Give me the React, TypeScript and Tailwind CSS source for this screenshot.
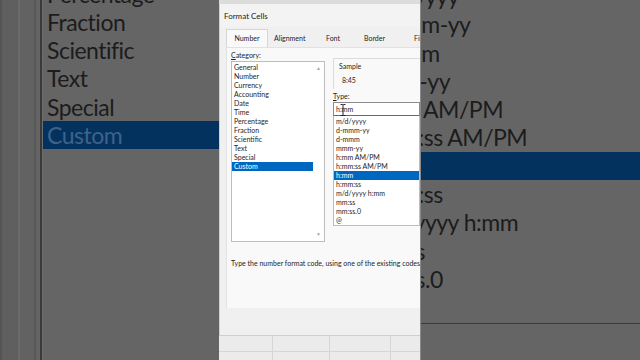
import React from "react";

const leftItems = ["Percentage", "Fraction", "Scientific", "Text", "Special", "Custom"];
const rightItems = [
  "m/d/yyyy",
  "d-mmm-yy",
  "d-mmm",
  "mmm-yy",
  "h:mm AM/PM",
  "h:mm:ss AM/PM",
  "h:mm",
  "h:mm:ss",
  "m/d/yyyy h:mm",
  "mm:ss",
  "mm:ss.0",
  "@",
];
const categories = [
  "General",
  "Number",
  "Currency",
  "Accounting",
  "Date",
  "Time",
  "Percentage",
  "Fraction",
  "Scientific",
  "Text",
  "Special",
  "Custom",
];

const big = { fontFamily: 'Lato, "Noto Sans", sans-serif' };
const ui = { fontFamily: 'Lato, "Noto Sans", sans-serif' };

function LeftBg() {
  return (
    <div className="w-[219px] shrink-0 h-full flex overflow-hidden">
      <div className="flex h-full shrink-0">
        <div className="w-[2px] bg-[#555555]" />
        <div className="w-[16px] bg-[#5f5f5f]" />
        <div className="w-[2px] bg-[#6b6b6b]" />
        <div className="w-[14px] bg-[#626262]" />
        <div className="w-[2px] bg-[#585858]" />
        <div className="w-[4px] bg-[#646464]" />
        <div className="w-[2px] bg-[#3a3a3a]" />
        <div className="w-[1px] bg-[#6e6e6e]" />
      </div>
      <div className="flex-1 flex flex-col mt-[-20.5px]" style={big}>
        {leftItems.map((t) => (
          <div
            key={t}
            className={
              "h-[28.3px] shrink-0 pl-[4px] text-[23px] leading-[28px] whitespace-nowrap tracking-[-0.5px] " +
              (t === "Custom" ? "bg-[#04325f] text-[#3f6289]" : "text-[#1c1c1c]")
            }
          >
            {t}
          </div>
        ))}
      </div>
    </div>
  );
}

function RightBg() {
  return (
    <div className="flex-1 h-full overflow-hidden border-l border-[#8a8a8a]">
      <div className="flex flex-col mt-[-18px] ml-[-57px] w-[300px]" style={big}>
        {rightItems.map((t) => (
          <div
            key={t}
            className={
              "h-[28.3px] shrink-0 text-[23px] leading-[28px] whitespace-nowrap tracking-[-0.5px] " +
              (t === "h:mm" ? "bg-[#04325f] text-[#c8d4e2]" : "text-[#1c1c1c]")
            }
          >
            {t}
          </div>
        ))}
        <div className="mt-[1.5px] border-t border-[#3a3a3a]" />
      </div>
    </div>
  );
}

function Dialog() {
  return (
    <div className="w-[201px] shrink-0 h-full flex flex-col overflow-hidden bg-[#dedede]" style={ui}>
      <div className="h-[4px] shrink-0 bg-[#dcdcdc]" />
      <div className="h-[331px] shrink-0 flex flex-col bg-[#f0f0f0] border-l border-[#d0d0d0]">
        <div className="h-[23px] shrink-0 flex items-center pl-[4px] text-[8px] text-[#1a1a1a] bg-[#f3f3f3]">
          Format Cells
        </div>
        <div className="h-[20px] shrink-0 flex items-end pl-[6px] text-[7px] text-[#222]">
          <div className="w-[42px] h-[18px] shrink-0 flex items-center justify-center bg-[#f9f9f9] border border-b-0 border-[#d6d6d6]">
            Number
          </div>
          <div className="w-[52px] h-[18px] flex items-center pl-[6px] shrink-0">Alignment</div>
          <div className="w-[38px] h-[18px] flex items-center pl-[6px] shrink-0">Font</div>
          <div className="w-[50px] h-[18px] flex items-center pl-[6px] shrink-0">Border</div>
          <div className="w-[30px] h-[18px] flex items-center pl-[6px] shrink-0">Fill</div>
        </div>
        <div className="h-[261px] shrink-0 ml-[6px] bg-[#f9f9f9] border-l border-t border-[#e2e2e2] flex flex-col pl-[4px] text-[7px] text-[#1e1e1e]">
          <div className="flex gap-[8px]">
            <div className="w-[94px] shrink-0 flex flex-col">
              <div className="h-[13px] flex items-center pt-[1px]">
                <span>
                  <span className="underline">C</span>ategory:
                </span>
              </div>
              <div className="h-[181px] bg-white border border-[#bdbdbd] flex">
                <div className="w-[81px] flex flex-col pt-[1px]">
                  {categories.map((c) => (
                    <div
                      key={c}
                      className={
                        "h-[9px] leading-[9px] pl-[2px] whitespace-nowrap " +
                        (c === "Custom" ? "bg-[#0067c0] text-white" : "")
                      }
                    >
                      {c}
                    </div>
                  ))}
                </div>
                <div className="flex-1 flex flex-col justify-between items-center py-[3px] text-[5px] text-[#a8a8a8]">
                  <span>▲</span>
                  <span>▼</span>
                </div>
              </div>
            </div>
            <div className="flex-1 flex flex-col">
              <div className="mt-[10px] h-[31px] border-l border-t border-[#dcdcdc] pl-[5px] flex flex-col">
                <div className="mt-[3px] h-[9px] leading-[9px]">Sample</div>
                <div className="mt-[5px] h-[9px] leading-[9px] pl-[3px]">8:45</div>
              </div>
              <div className="mt-[2px] h-[11px] flex items-center">
                <span>
                  <span className="underline">T</span>ype:
                </span>
              </div>
              <div className="relative h-[14px] bg-white border border-[#8c8c8c] border-b-[#6a6a6a] flex items-center pl-[2px]">
                h:mm
                <svg
                  className="absolute left-[6px] top-[1px]"
                  width="6"
                  height="12"
                  viewBox="0 0 6 12"
                >
                  <path d="M0.5 0.5h2l0.5 0.5 0.5-0.5h2M3 1v10M0.5 11.5h2l0.5-0.5 0.5 0.5h2" stroke="#111" strokeWidth="0.9" fill="none" />
                </svg>
              </div>
              <div className="h-[110px] bg-white border border-t-0 border-[#bdbdbd] flex flex-col pt-[1px]">
                {rightItems.map((t) => (
                  <div
                    key={t}
                    className={
                      "h-[9px] leading-[9px] pl-[2px] whitespace-nowrap " +
                      (t === "h:mm" ? "bg-[#0067c0] text-white" : "")
                    }
                  >
                    {t}
                  </div>
                ))}
              </div>
            </div>
          </div>
          <div className="mt-[16px] h-[10px] leading-[10px] whitespace-nowrap">
            Type the number format code, using one of the existing codes as a starting point.
          </div>
        </div>
      </div>
      <div className="flex-1 flex bg-[#ebebeb] border-t border-[#cfcfcf]">
        <div className="w-[54px] border-r border-[#d6d6d6] flex flex-col">
          <div className="h-[16px] border-b border-[#d6d6d6]" />
        </div>
        <div className="w-[57px] border-r border-[#d6d6d6] flex flex-col">
          <div className="h-[16px] border-b border-[#d6d6d6]" />
        </div>
        <div className="w-[61px] border-r border-[#d6d6d6] flex flex-col">
          <div className="h-[16px] border-b border-[#d6d6d6]" />
        </div>
        <div className="flex-1 flex flex-col">
          <div className="h-[16px] border-b border-[#d6d6d6]" />
        </div>
      </div>
    </div>
  );
}

export default function App() {
  return (
    <div className="w-[640px] h-[360px] overflow-hidden flex bg-[#656565]">
      <LeftBg />
      <Dialog />
      <RightBg />
    </div>
  );
}
